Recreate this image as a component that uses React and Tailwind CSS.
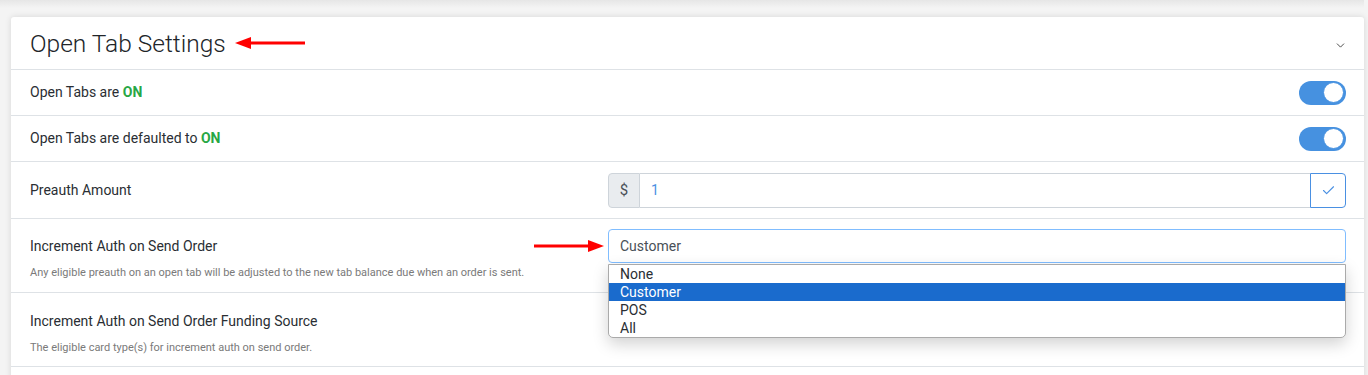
import { ChevronDown, Check } from 'lucide-react'

function Toggle() {
  return (
    <div className="w-[47px] h-[24px] rounded-full bg-[#4691e0] flex items-center justify-end px-[2px]">
      <div className="w-[21px] h-[21px] rounded-full bg-white border border-[#4691e0]" />
    </div>
  )
}

function Arrow({ dir = 'left' }) {
  // red annotation arrow
  return (
    <svg width="70" height="12" viewBox="0 0 70 12" className={dir === 'right' ? 'rotate-180' : ''}>
      <polygon points="0,6 16,0 16,12" fill="#f00" />
      <rect x="14" y="4.5" width="56" height="3" fill="#f00" />
    </svg>
  )
}

export default function App() {
  return (
    <div className="min-h-[375px] bg-[#f4f4f4] pr-[4px] font-['Roboto',sans-serif] text-[#2a2e33]">
      <div className="h-[8px] bg-gradient-to-b from-[#e6e6e6] to-[#f4f4f4]" />
      <div className="ml-[11px] mt-[9px] bg-white rounded-[3px] shadow-[0_0_6px_rgba(0,0,0,0.12)]">
        {/* Header */}
        <div className="h-[53px] pl-[19px] pr-[18px] flex items-center justify-between border-b border-[#dee2e6]">
          <div className="flex items-center gap-[9px]">
            <h2 className="text-[24.5px] font-light text-[#212529] pt-[2px]">Open Tab Settings</h2>
            <Arrow />
          </div>
          <ChevronDown size={13} strokeWidth={1.6} className="text-[#333] mt-[4px] mr-[-1px]" />
        </div>

        {/* Open Tabs */}
        <div className="h-[46px] pl-[19px] pr-[18px] flex items-center justify-between border-b border-[#dee2e6]">
          <span className="text-[14px]">
            Open Tabs are <b className="text-[#28a745] font-bold">ON</b>
          </span>
          <Toggle />
        </div>

        <div className="h-[46px] pl-[19px] pr-[18px] flex items-center justify-between border-b border-[#dee2e6]">
          <span className="text-[14px]">
            Open Tabs are defaulted to <b className="text-[#28a745] font-bold">ON</b>
          </span>
          <Toggle />
        </div>

        {/* Preauth */}
        <div className="h-[57px] pl-[19px] pr-[18px] flex items-center border-b border-[#dee2e6]">
          <span className="w-[578px] text-[14px]">Preauth Amount</span>
          <div className="flex-1 flex h-[35px]">
            <div className="w-[32px] bg-[#e9ecef] border border-[#ced4da] rounded-l-[4px] flex items-center justify-center text-[15px] text-[#495057]">
              $
            </div>
            <div className="flex-1 border-y border-[#ced4da] flex items-center pl-[11px] text-[14px] text-[#4a90e2]">
              1
            </div>
            <div className="w-[36px] border border-[#4a90e2] rounded-r-[4px] flex items-center justify-center">
              <Check size={15} strokeWidth={1.8} className="text-[#4a90e2]" />
            </div>
          </div>
        </div>

        {/* Increment Auth */}
        <div className="pl-[19px] pr-[18px] pt-[10px] pb-[12px] border-b border-[#dee2e6]">
          <div className="flex items-center">
            <div className="w-[578px] flex items-center justify-between pr-[4px]">
              <span className="text-[14px]">Increment Auth on Send Order</span>
              <Arrow dir="right" />
            </div>
            <div className="flex-1 relative">
              <div className="h-[34px] border border-[#80bdff] rounded-[4px] flex items-center pl-[11px] text-[14px] text-[#495057]">
                Customer
              </div>
              <ul className="absolute left-0 right-0 top-[35px] z-10 bg-white border border-[#aaa] rounded-b-[5px] text-[14px] leading-[18px] shadow-[0_6px_16px_rgba(0,0,0,0.18)]">
                <li className="pl-[11px] h-[18px]">None</li>
                <li className="pl-[11px] h-[18px] bg-[#1a6bcd] text-white">Customer</li>
                <li className="pl-[11px] h-[18px]">POS</li>
                <li className="pl-[11px] h-[18px]">All</li>
              </ul>
            </div>
          </div>
          <p className="mt-[2px] text-[11px] leading-[15px] text-[#7a7a7a]">
            Any eligible preauth on an open tab will be adjusted to the new tab balance due when an order is sent.
          </p>
        </div>

        <div className="pl-[19px] pr-[18px] pt-[11px] pb-[11px] border-b border-[#dee2e6]">
          <div className="h-[34px] flex items-center text-[14px]">Increment Auth on Send Order Funding Source</div>
          <p className="mt-[2px] text-[11px] leading-[15px] text-[#7a7a7a]">The eligible card type(s) for increment auth on send order.</p>
        </div>
        <div className="h-[20px]" />
      </div>
    </div>
  )
}
